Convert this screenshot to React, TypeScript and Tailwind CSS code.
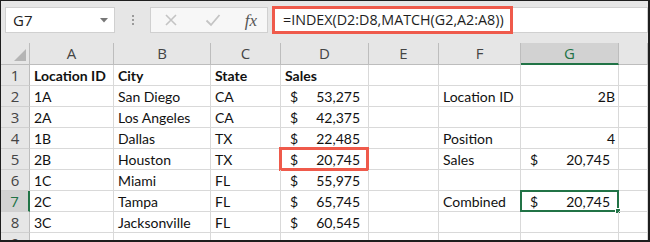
import React from "react";

type Cell = string | { money: string } | { right: string } | null;

const cols = ["A", "B", "C", "D", "E", "F", "G", ""];

const rows: Cell[][] = [
  ["Location ID", "City", "State", "Sales", null, null, null, null],
  ["1A", "San Diego", "CA", { money: "53,275" }, null, "Location ID", { right: "2B" }, null],
  ["2A", "Los Angeles", "CA", { money: "42,375" }, null, null, null, null],
  ["1B", "Dallas", "TX", { money: "22,485" }, null, "Position", { right: "4" }, null],
  ["2B", "Houston", "TX", { money: "20,745" }, null, "Sales", { money: "20,745" }, null],
  ["1C", "Miami", "FL", { money: "55,975" }, null, null, null, null],
  ["2C", "Tampa", "FL", { money: "65,745" }, null, "Combined", { money: "20,745" }, null],
  ["3C", "Jacksonville", "FL", { money: "60,545" }, null, null, null, null],
  [null, null, null, null, null, null, null, null],
];

const renderValue = (v: Cell, bold: boolean) => {
  if (v === null) return null;
  if (typeof v === "string") {
    return <span className={`pl-[4px] ${bold ? "font-bold" : ""}`}>{v}</span>;
  }
  if ("money" in v) {
    return (
      <div className="flex w-full justify-between pl-[9px] pr-[8px]">
        <span>$</span>
        <span>{v.money}</span>
      </div>
    );
  }
  return <span className="ml-auto pr-[3px]">{v.right}</span>;
};

const App = () => {
  return (
    <div className="w-[650px] h-[242px] overflow-hidden bg-white border-t border-l border-r-2 border-b-2 border-[#1e1e1e] flex flex-col">
      {/* formula bar */}
      <div className="h-[42px] shrink-0 bg-[#e6e6e6] flex items-start pt-[6px] pl-[4px] gap-0">
        <div className="w-[110px] h-[26px] bg-white border border-[#d0d0d0] flex items-center justify-between pl-[7px] pr-[6px] text-[15px] text-[#222] font-['Open_Sans',sans-serif]">
          <span>G7</span>
          <svg width="8" height="5" viewBox="0 0 8 5">
            <path d="M0 0 L8 0 L4 4.5 Z" fill="#777" />
          </svg>
        </div>
        <div className="w-[35px] h-[26px] flex flex-col items-center justify-center gap-[2px]">
          <span className="w-[2px] h-[2px] bg-[#9a9a9a]" />
          <span className="w-[2px] h-[2px] bg-[#9a9a9a]" />
          <span className="w-[2px] h-[2px] bg-[#9a9a9a]" />
        </div>
        <div className="w-[118px] h-[26px] bg-[#f7f7f7] border border-[#d0d0d0] flex items-center pl-[13px] pr-[6px]">
          <svg width="14" height="14" viewBox="0 0 14 14" className="mr-[27px]">
            <path d="M2 2 L12 12 M12 2 L2 12" stroke="#c4c4c4" strokeWidth="1.6" />
          </svg>
          <svg width="16" height="14" viewBox="0 0 16 14">
            <path d="M1.5 7.5 L6 12 L14.5 2" stroke="#c4c4c4" strokeWidth="1.8" fill="none" />
          </svg>
          <span className="ml-auto pr-[4px] text-[17px] leading-none text-[#555] italic font-['Liberation_Serif',serif]">
            fx
          </span>
        </div>
        <div className="relative ml-[4px] flex-1 h-[26px] bg-white border border-[#d0d0d0] flex items-center pl-[10px] text-[14.3px] text-[#1e1e1e] font-['Open_Sans',sans-serif]">
          <span>=INDEX(D2:D8,MATCH(G2,A2:A8))</span>
          <div className="absolute left-[-1px] top-[-2px] w-[241px] h-[28px] border-[3px] border-[#ef5a4b]" />
        </div>
      </div>

      {/* sheet */}
      <div className="grid grid-cols-[29px_84px_97px_70px_88px_70px_82px_98px_1fr] font-['Lato',sans-serif] text-[14px] text-[#111]">
        <div className="h-[22px] bg-[#e6e6e6] border-r border-b border-[#bdbdbd] relative">
          <svg width="12" height="12" viewBox="0 0 12 12" className="absolute right-[3px] bottom-[3px]">
            <path d="M12 0 L12 12 L0 12 Z" fill="#b5b5b5" />
          </svg>
        </div>
        {cols.map((c, i) => (
          <div
            key={i}
            className={`h-[22px] flex items-center justify-center text-[15px] font-['Open_Sans',sans-serif] border-r ${
              c === "G"
                ? "bg-[#d2d2d2] text-[#217346] border-b-2 border-b-[#217346] border-r-[#bdbdbd]"
                : "bg-[#e6e6e6] text-[#444] border-b border-[#bdbdbd]"
            }`}
          >
            {c}
          </div>
        ))}
        {rows.map((r, ri) => {
          const n = ri + 1;
          const sel = n === 7;
          return (
            <React.Fragment key={ri}>
              <div
                className={`h-[21px] flex items-center justify-center text-[15px] font-['Open_Sans',sans-serif] border-b border-b-[#d0d0d0] ${
                  sel
                    ? "bg-[#d2d2d2] text-[#217346] border-r-2 border-r-[#217346]"
                    : "bg-[#e6e6e6] text-[#444] border-r border-r-[#bdbdbd]"
                }`}
              >
                {n}
              </div>
              {r.map((v, ci) => (
                <div
                  key={ci}
                  className="relative h-[21px] flex items-center border-r border-b border-[#d9d9d9] whitespace-nowrap"
                >
                  {renderValue(v, n === 1)}
                  {n === 5 && ci === 3 && (
                    <div className="absolute left-[-2px] top-[-2px] right-[-1px] bottom-[-2px] border-[3px] border-[#ef5a4b]" />
                  )}
                  {n === 7 && ci === 6 && (
                    <>
                      <div className="absolute left-[-1px] top-[-1px] right-[-1px] bottom-[-1px] border-2 border-[#217346]" />
                      <div className="absolute right-[-3px] bottom-[-3px] w-[6px] h-[6px] bg-[#217346] border border-white" />
                    </>
                  )}
                </div>
              ))}
            </React.Fragment>
          );
        })}
      </div>
    </div>
  );
};

export default App;
